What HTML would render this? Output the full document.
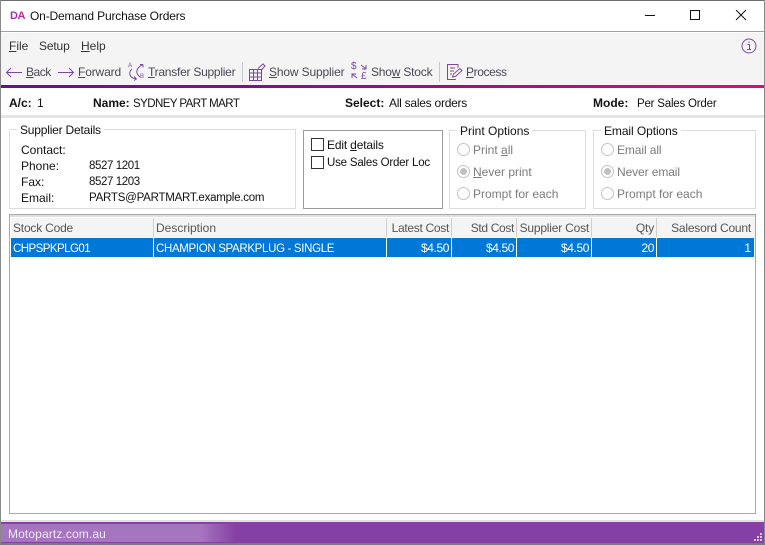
<!DOCTYPE html>
<html><head><meta charset="utf-8"><style>
html,body{margin:0;padding:0;background:#fff}
#w{position:relative;width:765px;height:545px;overflow:hidden;background:#fff;font:12px/16px "Liberation Sans",sans-serif;color:#111}
#w div,#w span.a{position:absolute;white-space:nowrap}
.t{color:#4c4655}
.g{color:#7a7a7a}
b{font-weight:bold}
u{text-underline-offset:1px}
.box{box-sizing:border-box;border:1px solid #dcdcdc}
.leg{background:#fff;padding:0 3px}
.r{box-sizing:border-box;width:13px;height:13px;border:1px solid #c4c4c4;border-radius:50%;background:#fff}
.r.on:after{content:"";position:absolute;left:2px;top:2px;width:7px;height:7px;border-radius:50%;background:#c0c0c0}
.c{box-sizing:border-box;width:13px;height:13px;border:1px solid #333;background:#fff}
.h{top:218px;height:19px;background:#f4f4f4;line-height:20px;color:#555;border-right:1px solid #cfcfcf;box-sizing:border-box;padding:0 2px;letter-spacing:-.2px}
.d{top:238px;height:19px;background:#0078d7;line-height:20px;color:#fff;border-right:1px solid #fff;box-sizing:border-box;padding:0 2px}
.ri{text-align:right}
.s{font-size:11.5px;line-height:18px}
.d.s{line-height:22px}
svg{position:absolute;fill:none;stroke:#7d479f;stroke-width:1}
</style></head><body><div id="w">
<div style="left:0;top:0;width:765px;height:1px;background:#6f6f6f"></div>
<div style="left:0;top:0;width:1px;height:545px;background:#8a8a8a"></div>
<div style="left:764px;top:0;width:1px;height:545px;background:#8a8a8a"></div>
<div style="left:10px;top:8px;font-weight:bold;font-size:11px;letter-spacing:-.5px;background:linear-gradient(90deg,#8f35c0,#d0208c);-webkit-background-clip:text;background-clip:text;color:transparent">DA</div>
<div style="left:30px;top:8px;letter-spacing:-.16px">On-Demand Purchase Orders</div>
<svg style="left:640px;top:5px;stroke:#111" width="120" height="22"><path d="M5 10.5H15M50.5 5.5H59.5V14.5H50.5ZM96 5L106 15M106 5L96 15"/></svg>
<div style="left:1px;top:31px;width:763px;height:1px;background:#a0a0a0"></div>
<div style="left:1px;top:33px;width:763px;height:52px;background:#f4f4f4"></div>
<div style="left:9px;top:38px;color:#333"><u>F</u>ile</div>
<div style="left:39px;top:38px;color:#333;letter-spacing:-.15px">Setup</div>
<div style="left:81px;top:38px;color:#333"><u>H</u>elp</div>
<svg style="left:741px;top:38px" width="16" height="16"><circle cx="8" cy="8" r="7"/><path d="M6.5 6.5H8.5V11.5M6 11.5H10M8 3.5V5"/></svg>
<svg style="left:5px;top:64px" width="18" height="16"><path d="M17 8.5H1.5M6 4L1.5 8.5L6 13"/></svg>
<div class="t" style="left:26px;top:64px;letter-spacing:-.5px"><u>B</u>ack</div>
<svg style="left:57px;top:64px" width="18" height="16"><path d="M1 8.5H16.5M12 4L16.5 8.5L12 13"/></svg>
<div class="t" style="left:78px;top:64px;letter-spacing:-.15px"><u>F</u>orward</div>
<svg style="left:127px;top:63px" width="19" height="18"><path d="M5 6C1.5 9 1.5 15 9.5 16M9.5 16L7 13.5M9.5 16L7 17.5M16 1.5C12 3 9 7 10 10C10.5 12 12 13 13 14M16 1.5L13 1.5M16 1.5L16 4.5"/></svg>
<div style="left:128px;top:63px;font-size:6px;line-height:7px;color:#7d479f">A</div>
<div style="left:140px;top:74px;font-size:6px;line-height:7px;color:#7d479f">B</div>
<div class="t" style="left:148px;top:64px;letter-spacing:-.25px"><u>T</u>ransfer Supplier</div>
<div style="left:242px;top:62px;width:1px;height:20px;background:#c8c8c8"></div>
<svg style="left:248px;top:63px" width="18" height="18"><path d="M1.5 6.5H13.5V17.5H1.5ZM1.5 10H13.5M1.5 14H13.5M5.5 6.5V17.5M9.5 6.5V17.5M10 5.5L15 1L17 3L13 7.5"/></svg>
<div class="t" style="left:269px;top:64px;letter-spacing:-.15px"><u>S</u>how Supplier</div>
<div style="left:351px;top:62px;font-size:10px;line-height:10px;color:#7d479f">$</div>
<div style="left:361px;top:72px;font-size:10px;line-height:10px;color:#7d479f">£</div>
<svg style="left:350px;top:63px" width="18" height="18"><path d="M11 2L16 6M16 2V6H12M2 11L7 15M2 15V11H6"/></svg>
<div class="t" style="left:371px;top:64px;letter-spacing:-.2px">Sho<u>w</u> Stock</div>
<div style="left:439px;top:62px;width:1px;height:20px;background:#c8c8c8"></div>
<svg style="left:445px;top:63px" width="18" height="18"><path d="M13 5V1.5H2.5V16.5H11M5 5H10M5 8H9M5 11H7M7.5 14L8.5 11L15 5.5L17 7.5L10.5 13.5Z"/></svg>
<div class="t" style="left:466px;top:64px;letter-spacing:-.4px"><u>P</u>rocess</div>
<div style="left:1px;top:85px;width:763px;height:3px;background:linear-gradient(90deg,#6a0a9c,#a3058c 50%,#e8067a)"></div>
<div style="left:9px;top:95px"><b>A/c:</b></div><div style="left:37px;top:95px">1</div>
<div style="left:93px;top:95px"><b>Name:</b></div><div class="s" style="left:133px;top:95px;letter-spacing:-.56px">SYDNEY PART MART</div>
<div style="left:345px;top:95px"><b>Select:</b></div><div style="left:389px;top:95px;letter-spacing:-.25px">All sales orders</div>
<div style="left:593px;top:95px"><b>Mode:</b></div><div class="s" style="left:637px;top:95px;letter-spacing:-.2px">Per Sales Order</div>
<div style="left:1px;top:115px;width:763px;height:3px;background:#e4e4e4"></div>
<div class="box" style="left:9px;top:129px;width:287px;height:80px"></div>
<div class="leg" style="left:17px;top:122px;letter-spacing:-.2px">Supplier Details</div>
<div style="left:21px;top:142px">Contact:</div>
<div style="left:21px;top:158px">Phone:</div><div class="s" style="left:89px;top:157px;letter-spacing:-.4px">8527 1201</div>
<div style="left:21px;top:174px">Fax:</div><div class="s" style="left:89px;top:173px;letter-spacing:-.4px">8527 1203</div>
<div style="left:21px;top:190px">Email:</div><div class="s" style="left:89px;top:189px;letter-spacing:-.23px">PARTS@PARTMART.example.com</div>
<div class="box" style="left:303px;top:130px;width:140px;height:79px;border-color:#9a9a9a"></div>
<div class="c" style="left:311px;top:138px"></div><div style="left:327px;top:137px;letter-spacing:-.17px">Edit <u>d</u>etails</div>
<div class="c" style="left:311px;top:156px"></div><div class="s" style="left:327px;top:154px;letter-spacing:-.2px">Use Sales Order Loc</div>
<div class="box" style="left:449px;top:130px;width:137px;height:79px"></div>
<div class="leg" style="left:457px;top:123px">Print Options</div>
<div class="r" style="left:457px;top:143px"></div><div class="g" style="left:473px;top:142px">Print <u>a</u>ll</div>
<div class="r on" style="left:457px;top:165px"></div><div class="g" style="left:473px;top:164px"><u>N</u>ever print</div>
<div class="r" style="left:457px;top:187px"></div><div class="g" style="left:473px;top:186px">Prompt for each</div>
<div class="box" style="left:593px;top:130px;width:163px;height:79px"></div>
<div class="leg" style="left:601px;top:123px;letter-spacing:-.08px">Email Options</div>
<div class="r" style="left:601px;top:143px"></div><div class="g" style="left:617px;top:142px;letter-spacing:-.1px">Email all</div>
<div class="r on" style="left:601px;top:165px"></div><div class="g" style="left:617px;top:164px;letter-spacing:-.1px">Never email</div>
<div class="r" style="left:601px;top:187px"></div><div class="g" style="left:617px;top:186px">Prompt for each</div>
<div style="left:9px;top:214px;width:747px;height:300px;box-sizing:border-box;border:1px solid #a8a8a8"></div>
<div style="left:10px;top:215px;width:745px;height:2px;background:#e0e0e0"></div>
<div class="h" style="left:11px;width:143px">Stock Code</div>
<div class="h" style="left:154px;width:233px;letter-spacing:0">Description</div>
<div class="h ri" style="left:387px;width:65px;letter-spacing:-.3px">Latest Cost</div>
<div class="h ri" style="left:452px;width:65px;letter-spacing:-.35px">Std Cost</div>
<div class="h ri" style="left:517px;width:75px">Supplier Cost</div>
<div class="h ri" style="left:592px;width:65px">Qty</div>
<div class="h ri" style="left:657px;width:98px;padding-right:4px;border-right:0">Salesord Count</div>
<div class="d s" style="left:11px;width:143px;letter-spacing:-.55px">CHPSPKPLG01</div>
<div class="d s" style="left:154px;width:233px;letter-spacing:-.33px">CHAMPION SPARKPLUG - SINGLE</div>
<div class="d ri" style="left:387px;width:65px;letter-spacing:-.4px">$4.50</div>
<div class="d ri" style="left:452px;width:65px;letter-spacing:-.4px">$4.50</div>
<div class="d ri" style="left:517px;width:75px;letter-spacing:-.4px">$4.50</div>
<div class="d ri" style="left:592px;width:65px;letter-spacing:-.4px">20</div>
<div class="d ri" style="left:657px;width:97px;padding-right:3px;border-right:0">1</div>
<div style="left:1px;top:520px;width:763px;height:2px;background:#e0e0e0"></div>
<div style="left:1px;top:522px;width:763px;height:21px;background:#8540a5"></div>
<div style="left:1px;top:524px;width:235px;height:18px;background:linear-gradient(90deg,#a575bf 85%,#8540a5)"></div>
<div style="left:8px;top:526px;color:#f3e9f8;letter-spacing:.12px">Motopartz.com.au</div>
<div style="left:0;top:543px;width:765px;height:2px;background:#7a7a7a"></div>
<svg style="left:752px;top:533px;stroke:none;fill:#d6c6de" width="12" height="10"><path d="M8 0h2v2H8zM8 3h2v2H8zM5 3h2v2H5zM8 6h2v2H8zM5 6h2v2H5zM2 6h2v2H2z"/></svg>
</div></body></html>
